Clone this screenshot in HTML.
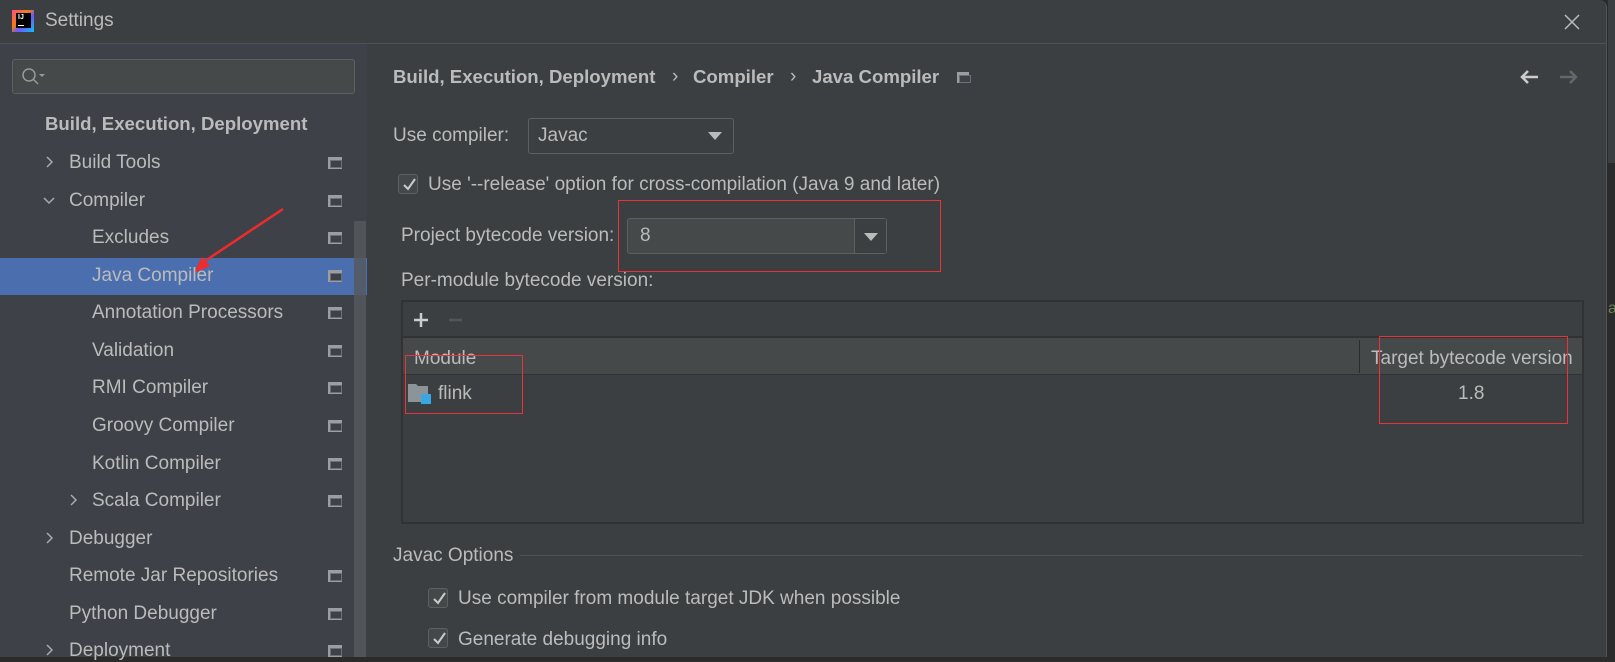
<!DOCTYPE html>
<html><head><meta charset="utf-8"><style>
*{box-sizing:border-box;margin:0;padding:0}
body{width:1615px;height:657px;overflow:hidden;background:#2b2b2b;font-family:"Liberation Sans",sans-serif;color:#bbbbbb;position:relative}
.a{position:absolute;white-space:nowrap}
.dlg{position:absolute;left:0;top:0;width:1607px;height:657px;background:#3c3f41;border-right:1px solid #555;border-top-right-radius:8px}
.side{position:absolute;left:0;top:44px;width:367px;height:613px;background:#3e4147}
.t{font-size:19px;line-height:22px}
.b{font-weight:bold;font-size:18.6px}
.ic{position:absolute;left:328px;width:14px;height:12px;background:#9a9da1;}
.ic::after{content:"";position:absolute;left:2px;top:3px;width:10px;height:6px;background:#3e4147;border:1px solid #6d7075}
.cb{position:absolute;width:20px;height:20px;border:1px solid #5e6060;border-radius:3px;background:#43494a}
.cb svg{position:absolute;left:2px;top:2px}
.red{position:absolute;border:1px solid #e8333a}
</style></head><body>
<div class="dlg"></div>
<div class="a" style="left:1608px;top:0;width:7px;height:163px;background:#3c3f41"></div>
<div class="a" style="left:0;top:43px;width:1607px;height:1px;background:#515151"></div>
<div class="a" style="left:12px;top:10px;width:22px;height:22px;background:linear-gradient(135deg,#fc4f8a,#f97a12 40%,#6b57ff 60%,#07c3f2)"></div>
<div class="a" style="left:16px;top:13px;width:15px;height:15px;background:#000;color:#fff;font-size:7px;font-weight:bold;padding:1px 2px;line-height:7px">IJ<div style="width:6px;height:1px;background:#fff;margin-top:4px"></div></div>
<div class="a t" style="left:45px;top:10px">Settings</div>
<svg class="a" style="left:1563px;top:13px" width="18" height="18"><path d="M2 2L16 16M16 2L2 16" stroke="#bbb" stroke-width="1.5"/></svg>
<div class="side"></div>
<div class="a" style="left:12px;top:59px;width:343px;height:35px;background:#45494a;border:1px solid #5e6060;border-radius:3px"></div>
<svg class="a" style="left:20px;top:66px" width="26" height="20"><circle cx="9" cy="9" r="6" fill="none" stroke="#999" stroke-width="1.5"/><path d="M13 13L18 18" stroke="#999" stroke-width="1.5"/><path d="M19 8h6l-3 3z" fill="#999"/></svg>
<div class="a t b" style="left:45px;top:113px">Build, Execution, Deployment</div>
<div class="a" style="left:0;top:258px;width:367px;height:37px;background:#4b6eaf"></div>
<div class="a" style="left:354px;top:221px;width:12px;height:436px;background:#55595e;opacity:.85"></div>
<svg class="a" style="left:0;top:0" width="367" height="657">
<g stroke="#aaa" stroke-width="1.5" fill="none">
<path d="M47 157l5 5-5 5"/><path d="M44 198l5 5 5-5"/><path d="M71 495l5 5-5 5"/><path d="M47 533l5 5-5 5"/><path d="M47 645l5 5-5 5"/>
</g>
<path d="M283 209L205 261" stroke="#f02b2b" stroke-width="2.5"/><path d="M194 273l8-16 8 9z" fill="#f02b2b"/>
</svg>
<div class="a t" style="left:69px;top:152px">Build Tools</div><div class="ic" style="top:157px"></div>
<div class="a t" style="left:69px;top:190px">Compiler</div><div class="ic" style="top:195px"></div>
<div class="a t" style="left:92px;top:227px">Excludes</div><div class="ic" style="top:232px"></div>
<div class="a t" style="left:92px;top:265px">Java Compiler</div><div class="ic" style="top:270px"></div>
<div class="a t" style="left:92px;top:302px">Annotation Processors</div><div class="ic" style="top:307px"></div>
<div class="a t" style="left:92px;top:340px">Validation</div><div class="ic" style="top:345px"></div>
<div class="a t" style="left:92px;top:377px">RMI Compiler</div><div class="ic" style="top:382px"></div>
<div class="a t" style="left:92px;top:415px">Groovy Compiler</div><div class="ic" style="top:420px"></div>
<div class="a t" style="left:92px;top:453px">Kotlin Compiler</div><div class="ic" style="top:458px"></div>
<div class="a t" style="left:92px;top:490px">Scala Compiler</div><div class="ic" style="top:495px"></div>
<div class="a t" style="left:69px;top:528px">Debugger</div>
<div class="a t" style="left:69px;top:565px">Remote Jar Repositories</div><div class="ic" style="top:570px"></div>
<div class="a t" style="left:69px;top:603px">Python Debugger</div><div class="ic" style="top:608px"></div>
<div class="a t" style="left:69px;top:640px">Deployment</div><div class="ic" style="top:645px"></div>
<div class="a t b" style="left:393px;top:66px">Build, Execution, Deployment</div>
<div class="a t" style="left:672px;top:66px">›</div>
<div class="a t b" style="left:693px;top:66px">Compiler</div>
<div class="a t" style="left:790px;top:66px">›</div>
<div class="a t b" style="left:812px;top:66px">Java Compiler</div>
<div class="ic" style="left:957px;top:72px;width:12px;height:11px;background:#9a9da1"></div>
<svg class="a" style="left:1518px;top:68px" width="70" height="20"><path d="M20 9H4M10 3L4 9l6 6" stroke="#ccc" stroke-width="2.5" fill="none"/><path d="M42 9h16M52 3l6 6-6 6" stroke="#666" stroke-width="2.5" fill="none"/></svg>
<div class="a t" style="left:393px;top:125px">Use compiler:</div>
<div class="a" style="left:528px;top:118px;width:206px;height:36px;border:1px solid #5e6060;border-radius:3px;background:#3c3f41"></div>
<div class="a t" style="left:538px;top:125px">Javac</div>
<svg class="a" style="left:708px;top:132px" width="14" height="8"><path d="M0 0h14L7 8z" fill="#bbb"/></svg>
<div class="cb" style="left:398px;top:174px"><svg width="16" height="16"><path d="M3 8l4 4 7-10" stroke="#ccc" stroke-width="2" fill="none"/></svg></div>
<div class="a t" style="left:428px;top:174px">Use '--release' option for cross-compilation (Java 9 and later)</div>
<div class="a t" style="left:401px;top:225px">Project bytecode version:</div>
<div class="a" style="left:627px;top:218px;width:260px;height:36px;border:1px solid #5e6060;border-radius:3px;background:#45494a"></div>
<div class="a" style="left:854px;top:219px;width:1px;height:34px;background:#5e6060"></div>
<div class="a" style="left:855px;top:219px;width:31px;height:34px;background:#3c3f41"></div>
<div class="a t" style="left:640px;top:225px">8</div>
<svg class="a" style="left:864px;top:233px" width="14" height="8"><path d="M0 0h14L7 8z" fill="#bbb"/></svg>
<div class="red" style="left:618px;top:200px;width:323px;height:72px"></div>
<div class="a t" style="left:401px;top:270px">Per-module bytecode version:</div>
<div class="a" style="left:401px;top:300px;width:1183px;height:224px;border:2px solid #323232;background:#3c3f41"></div>
<svg class="a" style="left:412px;top:310px" width="50" height="20"><path d="M9 3v14M2 10h14" stroke="#ccc" stroke-width="2.5"/><path d="M37 10h14" stroke="#555" stroke-width="2.5"/></svg>
<div class="a" style="left:403px;top:336px;width:1179px;height:2px;background:#323232"></div>
<div class="a" style="left:403px;top:338px;width:1179px;height:37px;background:#45494a;border-bottom:1px solid #323232"></div>
<div class="a" style="left:1359px;top:340px;width:1px;height:33px;background:#2b2b2b"></div>
<div class="a t" style="left:414px;top:348px">Module</div>
<div class="a t" style="left:1371px;top:348px">Target bytecode version</div>
<svg class="a" style="left:408px;top:382px" width="24" height="22"><path d="M0 2h8l2 2h10v16H0z" fill="#8d9499"/><rect x="13" y="12" width="10" height="10" fill="#3aa8e0"/></svg>
<div class="a t" style="left:438px;top:383px">flink</div>
<div class="a t" style="left:1458px;top:383px">1.8</div>
<div class="red" style="left:405px;top:355px;width:118px;height:59px"></div>
<div class="red" style="left:1379px;top:336px;width:189px;height:88px"></div>
<div class="a t" style="left:393px;top:545px">Javac Options</div>
<div class="a" style="left:520px;top:555px;width:1063px;height:1px;background:#4e5254"></div>
<div class="cb" style="left:428px;top:588px"><svg width="16" height="16"><path d="M3 8l4 4 7-10" stroke="#ccc" stroke-width="2" fill="none"/></svg></div>
<div class="a t" style="left:458px;top:588px">Use compiler from module target JDK when possible</div>
<div class="cb" style="left:428px;top:628px"><svg width="16" height="16"><path d="M3 8l4 4 7-10" stroke="#ccc" stroke-width="2" fill="none"/></svg></div>
<div class="a t" style="left:458px;top:629px">Generate debugging info</div>
<div class="a" style="left:1608px;top:300px;color:#6a8759;font-size:16px">a</div>
</body></html>
